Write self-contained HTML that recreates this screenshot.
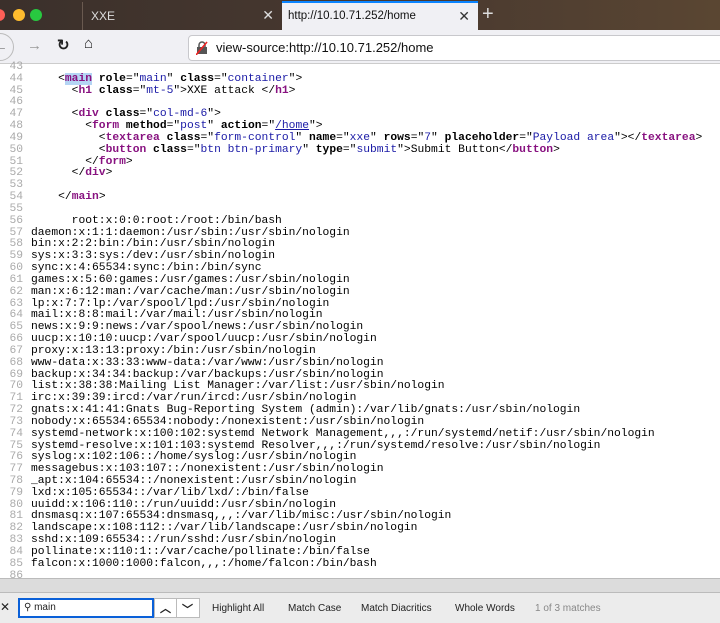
<!DOCTYPE html>
<html><head><meta charset="utf-8"><style>
*{margin:0;padding:0;box-sizing:border-box}
body{width:720px;height:623px;overflow:hidden;background:#fff;font-family:"Liberation Sans",sans-serif;position:relative}
#tabs{position:absolute;left:0;top:0;width:720px;height:30px;background:linear-gradient(90deg,#3b302b,#4a3a30 60%,#5a4632)}
.dot{position:absolute;top:9px;width:12px;height:12px;border-radius:50%}
#tab1{position:absolute;left:82px;top:2px;width:200px;height:28px;border-left:1px solid #6a5a50;color:#ddd;font-size:12px;line-height:28px;padding-left:8px}
#tab2{position:absolute;left:282px;top:1px;width:196px;height:29px;background:#f0f0f4;border-top:2px solid #0a84ff;color:#111;font-size:11.5px;line-height:27px;padding-left:6px}
.x{position:absolute;right:8px;top:0;font-size:14px}
#tb{position:absolute;left:0;top:30px;width:720px;height:34px;background:#f0f0f4;border-bottom:1px solid #ccc}
#url{position:absolute;left:188px;top:5px;width:540px;height:26px;background:#fff;border:1px solid #c8c8cc;border-radius:4px;font-size:13px;line-height:24px;padding-left:27px;color:#111}
#code{position:absolute;left:0;top:62px;width:720px;font-family:"Liberation Mono",monospace;font-size:11.3px;color:#000}
.l{height:11.83px;line-height:11.83px;white-space:pre;padding-left:31px;position:relative}
.n{position:absolute;left:0;width:23px;text-align:right;color:#aaa}
.t{color:#881280;font-weight:bold}.a{font-weight:bold}.v{color:#1a1aa6}.u{color:#1a1aa6;text-decoration:underline}
#sb{position:absolute;left:0;top:578px;width:720px;height:14px;background:#dcdcdc;border-top:1px solid #bbb}
#fb{position:absolute;left:0;top:592px;width:720px;height:31px;background:#ececec;border-top:1px solid #bbb;font-size:10px;color:#222}
#fb span{position:absolute;top:10px}
</style></head><body>
<div id="tabs">
<div class="dot" style="left:-7px;background:#fe5f57"></div>
<div class="dot" style="left:13px;background:#febc2e"></div>
<div class="dot" style="left:30px;background:#28c840"></div>
<div id="tab1">XXE<span class="x" style="top:-1px">✕</span></div>
<div id="tab2">http://10.10.71.252/home<span class="x" style="color:#333">✕</span></div>
<div style="position:absolute;left:482px;top:3px;color:#ddd;font-size:20px">+</div>
</div>
<div id="tb">
<div style="position:absolute;left:-14px;top:3px;width:28px;height:28px;border:1px solid #bbb;border-radius:50%;text-align:right;padding-right:5px;line-height:25px;color:#888;font-size:15px">←</div>
<div style="position:absolute;left:27px;top:7px;color:#999;font-size:15px">→</div>
<div style="position:absolute;left:57px;top:6px;color:#222;font-size:15px;font-weight:bold">↻</div>
<div style="position:absolute;left:84px;top:5px;color:#222;font-size:15px">⌂</div>
<div id="url"><svg style="position:absolute;left:7px;top:5px" width="12" height="14" viewBox="0 0 12 14"><rect x="1" y="6" width="10" height="7" fill="#555"/><path d="M3 6V4a3 3 0 016 0v2" stroke="#555" fill="none" stroke-width="1.5"/><path d="M0 14L11 1" stroke="#e22" stroke-width="1.6"/></svg>view-source:http://10.10.71.252/home</div>
</div>
<div id="code">
<div class="l"><span class="n">43</span></div>
<div class="l"><span class="n">44</span>    &lt;<span class="t" style="background:#b4d4f4">main</span> <span class="a">role</span>="<span class="v">main</span>" <span class="a">class</span>="<span class="v">container</span>"&gt;</div>
<div class="l"><span class="n">45</span>      &lt;<span class="t">h1</span> <span class="a">class</span>="<span class="v">mt-5</span>"&gt;XXE attack &lt;/<span class="t">h1</span>&gt;</div>
<div class="l"><span class="n">46</span></div>
<div class="l"><span class="n">47</span>      &lt;<span class="t">div</span> <span class="a">class</span>="<span class="v">col-md-6</span>"&gt;</div>
<div class="l"><span class="n">48</span>        &lt;<span class="t">form</span> <span class="a">method</span>="<span class="v">post</span>" <span class="a">action</span>="<span class="u">/home</span>"&gt;</div>
<div class="l"><span class="n">49</span>          &lt;<span class="t">textarea</span> <span class="a">class</span>="<span class="v">form-control</span>" <span class="a">name</span>="<span class="v">xxe</span>" <span class="a">rows</span>="<span class="v">7</span>" <span class="a">placeholder</span>="<span class="v">Payload area</span>"&gt;&lt;/<span class="t">textarea</span>&gt;</div>
<div class="l"><span class="n">50</span>          &lt;<span class="t">button</span> <span class="a">class</span>="<span class="v">btn btn-primary</span>" <span class="a">type</span>="<span class="v">submit</span>"&gt;Submit Button&lt;/<span class="t">button</span>&gt;</div>
<div class="l"><span class="n">51</span>        &lt;/<span class="t">form</span>&gt;</div>
<div class="l"><span class="n">52</span>      &lt;/<span class="t">div</span>&gt;</div>
<div class="l"><span class="n">53</span></div>
<div class="l"><span class="n">54</span>    &lt;/<span class="t">main</span>&gt;</div>
<div class="l"><span class="n">55</span></div>
<div class="l"><span class="n">56</span>      root:x:0:0:root:/root:/bin/bash</div>
<div class="l"><span class="n">57</span>daemon:x:1:1:daemon:/usr/sbin:/usr/sbin/nologin</div>
<div class="l"><span class="n">58</span>bin:x:2:2:bin:/bin:/usr/sbin/nologin</div>
<div class="l"><span class="n">59</span>sys:x:3:3:sys:/dev:/usr/sbin/nologin</div>
<div class="l"><span class="n">60</span>sync:x:4:65534:sync:/bin:/bin/sync</div>
<div class="l"><span class="n">61</span>games:x:5:60:games:/usr/games:/usr/sbin/nologin</div>
<div class="l"><span class="n">62</span>man:x:6:12:man:/var/cache/man:/usr/sbin/nologin</div>
<div class="l"><span class="n">63</span>lp:x:7:7:lp:/var/spool/lpd:/usr/sbin/nologin</div>
<div class="l"><span class="n">64</span>mail:x:8:8:mail:/var/mail:/usr/sbin/nologin</div>
<div class="l"><span class="n">65</span>news:x:9:9:news:/var/spool/news:/usr/sbin/nologin</div>
<div class="l"><span class="n">66</span>uucp:x:10:10:uucp:/var/spool/uucp:/usr/sbin/nologin</div>
<div class="l"><span class="n">67</span>proxy:x:13:13:proxy:/bin:/usr/sbin/nologin</div>
<div class="l"><span class="n">68</span>www-data:x:33:33:www-data:/var/www:/usr/sbin/nologin</div>
<div class="l"><span class="n">69</span>backup:x:34:34:backup:/var/backups:/usr/sbin/nologin</div>
<div class="l"><span class="n">70</span>list:x:38:38:Mailing List Manager:/var/list:/usr/sbin/nologin</div>
<div class="l"><span class="n">71</span>irc:x:39:39:ircd:/var/run/ircd:/usr/sbin/nologin</div>
<div class="l"><span class="n">72</span>gnats:x:41:41:Gnats Bug-Reporting System (admin):/var/lib/gnats:/usr/sbin/nologin</div>
<div class="l"><span class="n">73</span>nobody:x:65534:65534:nobody:/nonexistent:/usr/sbin/nologin</div>
<div class="l"><span class="n">74</span>systemd-network:x:100:102:systemd Network Management,,,:/run/systemd/netif:/usr/sbin/nologin</div>
<div class="l"><span class="n">75</span>systemd-resolve:x:101:103:systemd Resolver,,,:/run/systemd/resolve:/usr/sbin/nologin</div>
<div class="l"><span class="n">76</span>syslog:x:102:106::/home/syslog:/usr/sbin/nologin</div>
<div class="l"><span class="n">77</span>messagebus:x:103:107::/nonexistent:/usr/sbin/nologin</div>
<div class="l"><span class="n">78</span>_apt:x:104:65534::/nonexistent:/usr/sbin/nologin</div>
<div class="l"><span class="n">79</span>lxd:x:105:65534::/var/lib/lxd/:/bin/false</div>
<div class="l"><span class="n">80</span>uuidd:x:106:110::/run/uuidd:/usr/sbin/nologin</div>
<div class="l"><span class="n">81</span>dnsmasq:x:107:65534:dnsmasq,,,:/var/lib/misc:/usr/sbin/nologin</div>
<div class="l"><span class="n">82</span>landscape:x:108:112::/var/lib/landscape:/usr/sbin/nologin</div>
<div class="l"><span class="n">83</span>sshd:x:109:65534::/run/sshd:/usr/sbin/nologin</div>
<div class="l"><span class="n">84</span>pollinate:x:110:1::/var/cache/pollinate:/bin/false</div>
<div class="l"><span class="n">85</span>falcon:x:1000:1000:falcon,,,:/home/falcon:/bin/bash</div>
<div class="l"><span class="n">86</span></div>
</div>
<div id="sb"></div>
<div id="fb">
<span style="left:0;top:7px;font-size:12px">✕</span>
<div style="position:absolute;left:18px;top:5px;width:136px;height:20px;background:#fff;border:2px solid #0a60d8;font-size:10px;line-height:16px;padding-left:4px">⚲ main</div>
<div style="position:absolute;left:154px;top:5px;width:46px;height:20px;background:#fff;border:1px solid #bbb"></div>
<div style="position:absolute;left:176px;top:5px;width:1px;height:20px;background:#bbb"></div>
<span style="left:160px;top:7px;font-size:11px;font-weight:bold">︿</span>
<span style="left:182px;top:8px;font-size:11px;font-weight:bold">﹀</span>
<span style="left:212px">Highlight All</span>
<span style="left:288px">Match Case</span>
<span style="left:361px">Match Diacritics</span>
<span style="left:455px">Whole Words</span>
<span style="left:535px;color:#888">1 of 3 matches</span>
</div>
</body></html>
